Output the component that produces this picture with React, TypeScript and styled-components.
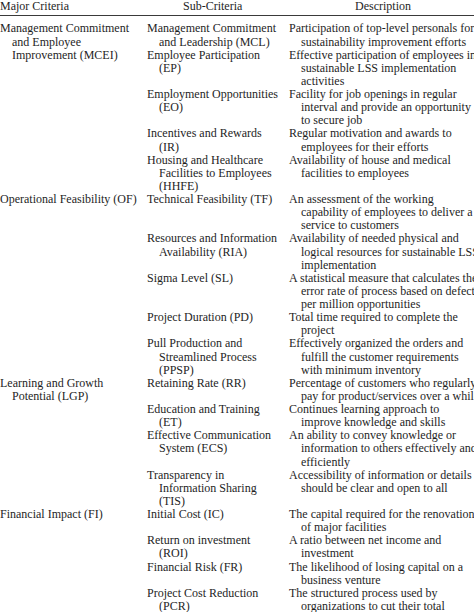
import React from "react";
import styled, { createGlobalStyle } from "styled-components";

const Global = createGlobalStyle`
  html, body {
    margin: 0;
    padding: 0;
    background: #ffffff;
    overflow: hidden;
  }
  #root {
    width: 474px;
    height: 612px;
    overflow: hidden;
  }
`;

const Table = styled.div`
  font-family: "Liberation Serif", "Times New Roman", serif;
  font-size: 12px;
  line-height: 13.12px;
  color: #1e1e1e;
  width: 520px;
`;

const HeaderRow = styled.div`
  display: grid;
  grid-template-columns: 147px 142px 1fr;
  line-height: 12px;
  padding-bottom: 3px;
  border-bottom: 1px solid #3a3a3a;
  width: 474px;
`;

const HeaderCell = styled.div<{ $pad: number }>`
  padding-left: ${(p) => p.$pad}px;
  white-space: nowrap;
`;

const Body = styled.div`
  padding-top: 6.4px;
`;

const Group = styled.div`
  display: flex;
  align-items: flex-start;
`;

const MajorCell = styled.div`
  width: 147px;
  flex: none;
`;

const SubList = styled.div`
  display: flex;
  flex-direction: column;
  flex: 1;
`;

const SubRow = styled.div`
  display: grid;
  grid-template-columns: 142px 1fr;
  align-items: start;
`;

const Line = styled.div<{ $indent: boolean }>`
  white-space: nowrap;
  padding-left: ${(p) => (p.$indent ? 12 : 0)}px;
`;

const Lines: React.FC<{ lines: string[] }> = ({ lines }) => (
  <div>
    {lines.map((l, i) => (
      <Line key={i} $indent={i > 0}>
        {l}
      </Line>
    ))}
  </div>
);

type Row = { sub: string[]; desc: string[] };
type GroupData = { major: string[]; rows: Row[] };

const data: GroupData[] = [
  {
    major: ["Management Commitment", "and Employee", "Improvement (MCEI)"],
    rows: [
      {
        sub: ["Management Commitment", "and Leadership (MCL)"],
        desc: ["Participation of top-level personals for", "sustainability improvement efforts"],
      },
      {
        sub: ["Employee Participation", "(EP)"],
        desc: ["Effective participation of employees in", "sustainable LSS implementation", "activities"],
      },
      {
        sub: ["Employment Opportunities", "(EO)"],
        desc: ["Facility for job openings in regular", "interval and provide an opportunity", "to secure job"],
      },
      {
        sub: ["Incentives and Rewards", "(IR)"],
        desc: ["Regular motivation and awards to", "employees for their efforts"],
      },
      {
        sub: ["Housing and Healthcare", "Facilities to Employees", "(HHFE)"],
        desc: ["Availability of house and medical", "facilities to employees"],
      },
    ],
  },
  {
    major: ["Operational Feasibility (OF)"],
    rows: [
      {
        sub: ["Technical Feasibility (TF)"],
        desc: ["An assessment of the working", "capability of employees to deliver a", "service to customers"],
      },
      {
        sub: ["Resources and Information", "Availability (RIA)"],
        desc: ["Availability of needed physical and", "logical resources for sustainable LSS", "implementation"],
      },
      {
        sub: ["Sigma Level (SL)"],
        desc: ["A statistical measure that calculates the", "error rate of process based on defect", "per million opportunities"],
      },
      {
        sub: ["Project Duration (PD)"],
        desc: ["Total time required to complete the", "project"],
      },
      {
        sub: ["Pull Production and", "Streamlined Process", "(PPSP)"],
        desc: ["Effectively organized the orders and", "fulfill the customer requirements", "with minimum inventory"],
      },
    ],
  },
  {
    major: ["Learning and Growth", "Potential (LGP)"],
    rows: [
      {
        sub: ["Retaining Rate (RR)"],
        desc: ["Percentage of customers who regularly", "pay for product/services over a while"],
      },
      {
        sub: ["Education and Training", "(ET)"],
        desc: ["Continues learning approach to", "improve knowledge and skills"],
      },
      {
        sub: ["Effective Communication", "System (ECS)"],
        desc: ["An ability to convey knowledge or", "information to others effectively and", "efficiently"],
      },
      {
        sub: ["Transparency in", "Information Sharing", "(TIS)"],
        desc: ["Accessibility of information or details", "should be clear and open to all"],
      },
    ],
  },
  {
    major: ["Financial Impact (FI)"],
    rows: [
      {
        sub: ["Initial Cost (IC)"],
        desc: ["The capital required for the renovation", "of major facilities"],
      },
      {
        sub: ["Return on investment", "(ROI)"],
        desc: ["A ratio between net income and", "investment"],
      },
      {
        sub: ["Financial Risk (FR)"],
        desc: ["The likelihood of losing capital on a", "business venture"],
      },
      {
        sub: ["Project Cost Reduction", "(PCR)"],
        desc: ["The structured process used by", "organizations to cut their total"],
      },
    ],
  },
];

export default function App() {
  return (
    <>
      <Global />
      <Table>
        <HeaderRow>
          <HeaderCell $pad={0}>Major Criteria</HeaderCell>
          <HeaderCell $pad={36}>Sub-Criteria</HeaderCell>
          <HeaderCell $pad={66}>Description</HeaderCell>
        </HeaderRow>
        <Body>
          {data.map((g, gi) => (
            <Group key={gi}>
              <MajorCell>
                <Lines lines={g.major} />
              </MajorCell>
              <SubList>
                {g.rows.map((r, ri) => (
                  <SubRow key={ri}>
                    <Lines lines={r.sub} />
                    <Lines lines={r.desc} />
                  </SubRow>
                ))}
              </SubList>
            </Group>
          ))}
        </Body>
      </Table>
    </>
  );
}
